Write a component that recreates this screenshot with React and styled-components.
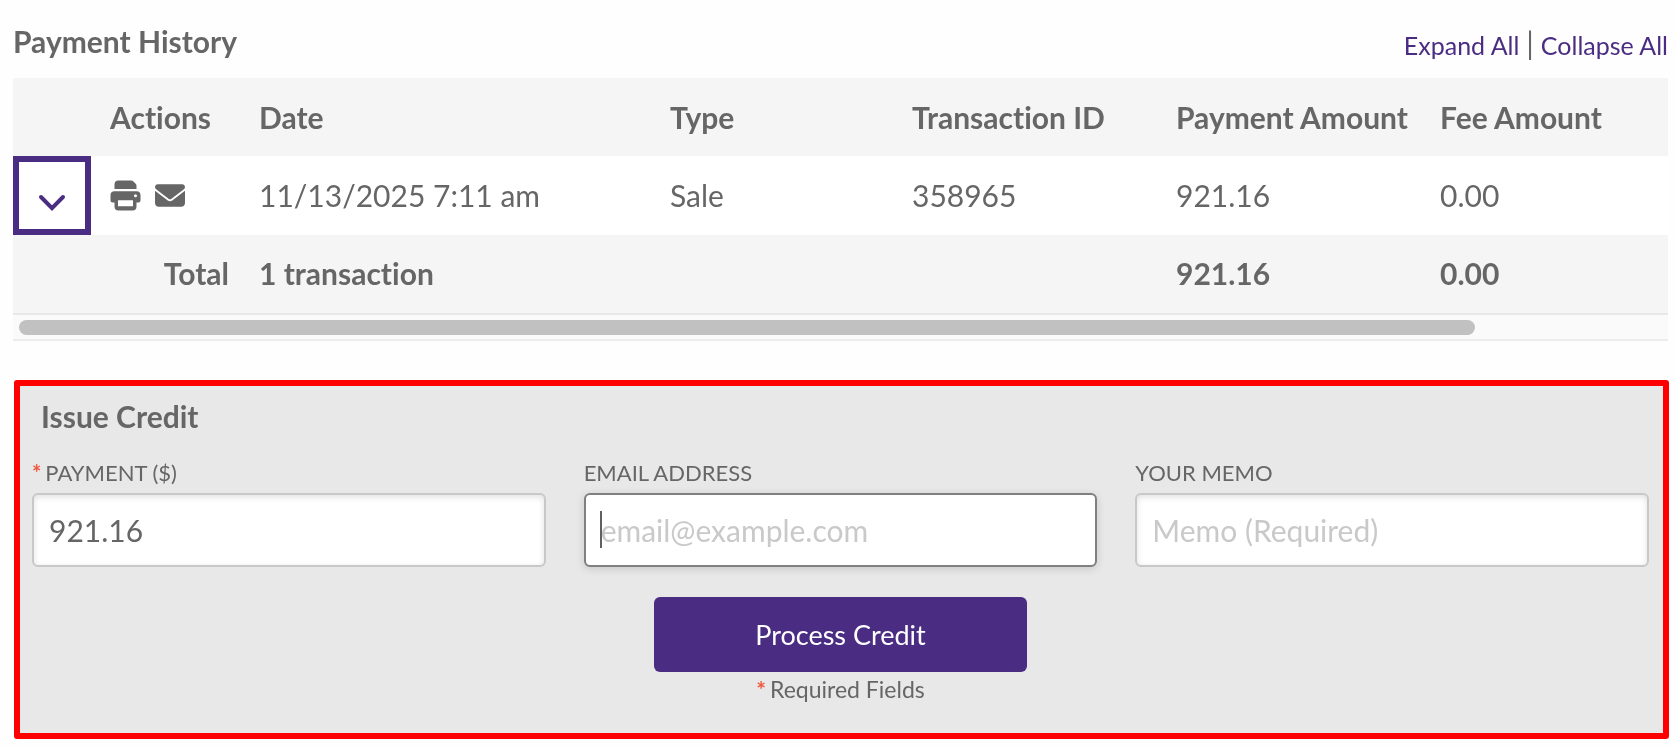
import React from "react";
import styled, { createGlobalStyle } from "styled-components";

const purple = "#4b2c83";
const ink = "#666666";

const GlobalStyle = createGlobalStyle`
  *, *::before, *::after { box-sizing: border-box; }
  body {
    margin: 0;
    background: #fefefe;
    color: ${ink};
    font-family: Lato, "Liberation Sans", sans-serif;
    font-size: 30px;
    font-variant-ligatures: none;
    line-height: 36px;
  }
`;

const Page = styled.main`
  padding: 23px 7px 6px 13px;
`;

const HistoryHeader = styled.header`
  display: flex;
  justify-content: space-between;
  align-items: flex-start;
  height: 55px;
`;

const Heading = styled.h2`
  margin: 0;
  font-size: 30px;
  line-height: 36px;
  font-weight: 700;
`;

const ToggleLinks = styled.nav`
  display: flex;
  align-items: baseline;
  gap: 7px;
  padding-top: 2px;
`;

const ToggleLink = styled.a`
  color: ${purple};
  font-size: 25px;
  text-decoration: none;
`;

const TableScroller = styled.div`
  overflow-x: auto;
  scrollbar-width: none;
`;

const Table = styled.table`
  width: 113%;
  table-layout: fixed;
  border-collapse: collapse;
`;

const Column = styled.col`
  width: ${(p) => p.$width};
`;

const Row = styled.tr`
  height: ${(p) => p.$height};
  background: ${(p) => (p.$shaded ? "#f5f5f5" : "#ffffff")};
  font-weight: ${(p) => (p.$shaded ? 700 : 400)};
`;

const HeadCell = styled.th`
  padding: 0 15px 1px;
  text-align: left;
  white-space: nowrap;
`;

const Cell = styled.td`
  padding: ${(p) => (p.$flush ? 0 : "0 15px 2px")};
  text-align: ${(p) => (p.$end ? "right" : "left")};
  white-space: nowrap;
`;

const ExpandButton = styled.button`
  display: flex;
  align-items: center;
  justify-content: center;
  width: 78px;
  height: 79px;
  padding: 14px 0 0;
  border: 6px solid ${purple};
  background: #ffffff;
  color: ${purple};
`;

const Actions = styled.div`
  display: flex;
  align-items: center;
  gap: 14px;
  padding-top: 2px;
`;

const IconButton = styled.button`
  display: flex;
  padding: 0;
  border: 0;
  background: none;
  color: ${ink};
`;

const ScrollTrack = styled.div`
  height: 28px;
  padding: 5px 6px;
  border-top: 2px solid #e8e8e8;
  border-bottom: 2px solid #ececec;
  background: #fafafa;
`;

const ScrollThumb = styled.div`
  width: calc(89% - 6px);
  height: 15px;
  border-radius: 8px;
  background: #c1c1c1;
`;

const CreditPanel = styled.form`
  margin: 39px -1px 0 1px;
  padding: 12px 14px 30px 12px;
  border: 6px solid #ff0000;
  border-radius: 3px;
  background: #e8e8e8;
`;

const PanelTitle = styled(Heading)`
  padding-left: 9px;
`;

const Fields = styled.div`
  display: grid;
  grid-template-columns: repeat(3, 1fr);
  gap: 38px;
  margin-top: 25px;
`;

const Field = styled.div`
  display: flex;
  flex-direction: column;
  gap: 6px;
`;

const Label = styled.label`
  font-size: 22px;
  line-height: 28px;
  text-transform: uppercase;
`;

const Asterisk = styled.span`
  margin-right: 4px;
  color: #f0563d;
  font-weight: 700;
`;

const InputWrap = styled.div`
  position: relative;
  display: flex;
`;

const Input = styled.input`
  width: 100%;
  height: 74px;
  padding: 0 15px 1px;
  border: 2px solid ${(p) => (p.$active ? "#808080" : "#c8c8c8")};
  border-radius: 6px;
  background: #ffffff;
  box-shadow: ${(p) =>
    p.$active
      ? "0 2px 8px rgba(0, 0, 0, 0.14)"
      : "inset 0 2px 6px rgba(0, 0, 0, 0.12)"};
  color: ${ink};
  caret-color: transparent;
  font: inherit;
  outline: none;

  &::placeholder {
    color: #c9c9c9;
    opacity: 1;
  }
`;

const Caret = styled.span`
  position: absolute;
  top: 18px;
  left: 16px;
  width: 2px;
  height: 37px;
  background: #606060;
`;

const Submission = styled.div`
  display: flex;
  flex-direction: column;
  align-items: center;
  gap: 3px;
  margin-top: 30px;
`;

const SubmitButton = styled.button`
  width: 373px;
  height: 75px;
  border: 0;
  border-radius: 6px;
  background: ${purple};
  color: #ffffff;
  font-family: inherit;
  font-size: 27px;
`;

const RequiredNote = styled.p`
  margin: 0;
  font-size: 23px;
  line-height: 28px;
`;

const ChevronIcon = () => (
  <svg width="28" height="18" viewBox="0 0 28 18" fill="none" aria-hidden="true">
    <path d="M3 3 14 14.2 25 3" stroke="currentColor" strokeWidth="4" strokeLinecap="round" />
  </svg>
);

const PrinterIcon = () => (
  <svg width="31" height="31" viewBox="0 0 31 31" fill="currentColor" aria-hidden="true">
    <path d="M4.5 9V4.5A4 4 0 0 1 8.5.5H21.200q1.200 0 2.200.9l2.300 2.300q.8.9.8 2.100V9Z" />
    <path
      fillRule="evenodd"
      d="M4.500 11.300h22a4 4 0 0 1 4 4v5.200a2 2 0 0 1-2 2h-2v4a4 4 0 0 1-4 4h-14a4 4 0 0 1-4-4v-4h-2a2 2 0 0 1-2-2v-5.200a4 4 0 0 1 4-4ZM8 20.300v5.900h15v-5.900ZM25.500 14.300a1.500 1.500 0 1 0 0 3 1.500 1.500 0 0 0 0-3Z"
    />
  </svg>
);

const EnvelopeIcon = () => (
  <svg width="30" height="23" viewBox="0 64 512 384" fill="currentColor" aria-hidden="true">
    <path d="M48 64C21.500 64 0 85.500 0 112c0 15.100 7.100 29.300 19.200 38.400L236.800 313.600c11.400 8.500 27 8.500 38.400 0L492.800 150.400c12.100-9.100 19.200-23.300 19.200-38.400 0-26.500-21.500-48-48-48H48ZM0 176v208c0 35.300 28.700 64 64 64h384c35.300 0 64-28.700 64-64V176L294.400 339.200c-22.800 17.100-54 17.100-76.800 0L0 176Z" />
  </svg>
);

function PaymentHistory() {
  return (
    <section>
      <HistoryHeader>
        <Heading>Payment History</Heading>
        <ToggleLinks aria-label="Row details">
          <ToggleLink href="#expand">Expand All</ToggleLink>
          <span>|</span>
          <ToggleLink href="#collapse">Collapse All</ToggleLink>
        </ToggleLinks>
      </HistoryHeader>
      <TableScroller>
        <Table>
          <colgroup>
            <Column $width="82px" />
            <Column $width="149px" />
            <Column $width="411px" />
            <Column $width="242px" />
            <Column $width="264px" />
            <Column $width="264px" />
            <Column />
          </colgroup>
          <thead>
            <Row $shaded $height="78px">
              <HeadCell aria-label="Details" />
              <HeadCell>Actions</HeadCell>
              <HeadCell>Date</HeadCell>
              <HeadCell>Type</HeadCell>
              <HeadCell>Transaction ID</HeadCell>
              <HeadCell>Payment Amount</HeadCell>
              <HeadCell>Fee Amount</HeadCell>
            </Row>
          </thead>
          <tbody>
            <Row $height="79px">
              <Cell $flush>
                <ExpandButton type="button" aria-label="Expand row">
                  <ChevronIcon />
                </ExpandButton>
              </Cell>
              <Cell>
                <Actions>
                  <IconButton type="button" aria-label="Print">
                    <PrinterIcon />
                  </IconButton>
                  <IconButton type="button" aria-label="Email">
                    <EnvelopeIcon />
                  </IconButton>
                </Actions>
              </Cell>
              <Cell>11/13/2025 7:11 am</Cell>
              <Cell>Sale</Cell>
              <Cell>358965</Cell>
              <Cell>921.16</Cell>
              <Cell>0.00</Cell>
            </Row>
          </tbody>
          <tfoot>
            <Row $shaded $height="78px">
              <Cell colSpan={2} $end>Total</Cell>
              <Cell colSpan={3}>1 transaction</Cell>
              <Cell>921.16</Cell>
              <Cell>0.00</Cell>
            </Row>
          </tfoot>
        </Table>
      </TableScroller>
      <ScrollTrack>
        <ScrollThumb />
      </ScrollTrack>
    </section>
  );
}

function IssueCredit() {
  return (
    <CreditPanel>
      <PanelTitle>Issue Credit</PanelTitle>
      <Fields>
        <Field>
          <Label htmlFor="payment">
            <Asterisk>*</Asterisk>Payment ($)
          </Label>
          <InputWrap>
            <Input id="payment" type="text" defaultValue="921.16" />
          </InputWrap>
        </Field>
        <Field>
          <Label htmlFor="email">Email Address</Label>
          <InputWrap>
            <Input id="email" type="email" placeholder="email@example.com" $active />
            <Caret />
          </InputWrap>
        </Field>
        <Field>
          <Label htmlFor="memo">Your Memo</Label>
          <InputWrap>
            <Input id="memo" type="text" placeholder="Memo (Required)" />
          </InputWrap>
        </Field>
      </Fields>
      <Submission>
        <SubmitButton type="button">Process Credit</SubmitButton>
        <RequiredNote>
          <Asterisk>*</Asterisk>Required Fields
        </RequiredNote>
      </Submission>
    </CreditPanel>
  );
}

export default function App() {
  return (
    <>
      <GlobalStyle />
      <Page>
        <PaymentHistory />
        <IssueCredit />
      </Page>
    </>
  );
}
